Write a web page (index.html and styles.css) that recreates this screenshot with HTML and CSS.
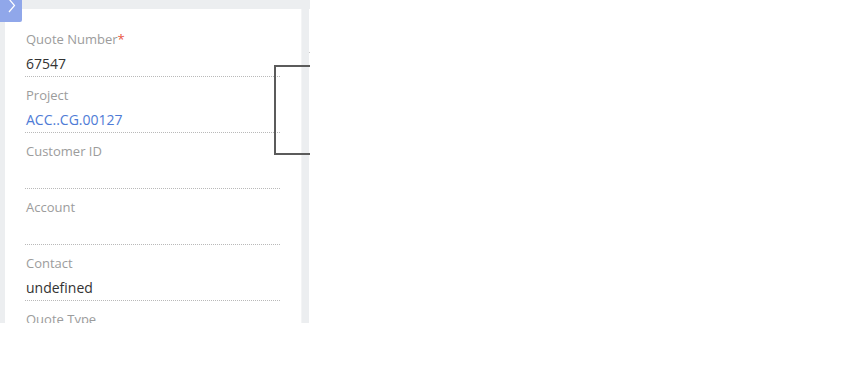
FILE: index.html
```html
<!DOCTYPE html>
<html>
<head>
<meta charset="utf-8">
<link rel="stylesheet" href="styles.css">
</head>
<body>
<div class="frame">
  <div class="columns">
    <div class="card">
      <div class="field">
        <div class="label">Quote Number<span class="req">*</span></div>
        <div class="value">67547</div>
      </div>
      <div class="field">
        <div class="label">Project</div>
        <div class="value link">ACC..CG.00127</div>
      </div>
      <div class="field">
        <div class="label">Customer ID</div>
        <div class="value"></div>
      </div>
      <div class="field">
        <div class="label">Account</div>
        <div class="value"></div>
      </div>
      <div class="field">
        <div class="label">Contact</div>
        <div class="value">undefined</div>
      </div>
      <div class="field">
        <div class="label">Quote Type</div>
        <div class="value"></div>
      </div>
    </div>
    <div class="side"><div class="tick"></div></div>
  </div>
  <button class="toggle" type="button" aria-label="Expand">
    <svg width="22" height="22" viewBox="0 0 22 22"><polyline points="9,-1 14.5,5.5 9,12" fill="none" stroke="#fff" stroke-width="1.2"/></svg>
  </button>
  <div class="bracket"></div>
</div>
</body>
</html>
```
FILE: styles.css
```css
html, body {
  margin: 0;
  padding: 0;
  background: #fff;
}
body {
  font-family: "Open Sans", "Liberation Sans", sans-serif;
}
.frame {
  position: relative;
  width: 310px;
  height: 323px;
  overflow: hidden;
  background: #eceef0;
}
.columns {
  display: flex;
  padding-top: 9px;
  padding-left: 5px;
  height: 100%;
  box-sizing: border-box;
}
.card {
  width: 296px;
  box-sizing: border-box;
  background: #fff;
  padding: 12px 21px 0 20px;
  flex: none;
  box-shadow: 1px 0 0 #f3f4f5;
}
.side {
  margin-left: 8px;
  flex: 1;
  background: #fff;
  position: relative;
}
.tick {
  margin-top: 43px;
  width: 4px;
  height: 1px;
  background: #c8c8c8;
}
.field {
  height: 47px;
  padding-top: 8px;
  padding-left: 1px;
  border-bottom: 1px dotted #b9b9b9;
}
.label {
  font-size: 13px;
  line-height: 20px;
  color: #9c9c9c;
}
.req {
  color: #e8563f;
}
.value {
  margin-top: 2px;
  font-size: 14px;
  line-height: 25px;
  height: 25px;
  color: #333;
}
.link {
  color: #4e7bd6;
}
.toggle {
  position: absolute;
  left: 0;
  top: 0;
  width: 22px;
  height: 22px;
  padding: 0;
  border: 0;
  border-bottom-right-radius: 2px;
  background: #90a7ea;
  display: block;
}
.toggle svg {
  display: block;
}
.bracket {
  position: absolute;
  left: 274px;
  top: 65px;
  width: 60px;
  height: 86px;
  border: 2px solid #5b5b5b;
}
```
